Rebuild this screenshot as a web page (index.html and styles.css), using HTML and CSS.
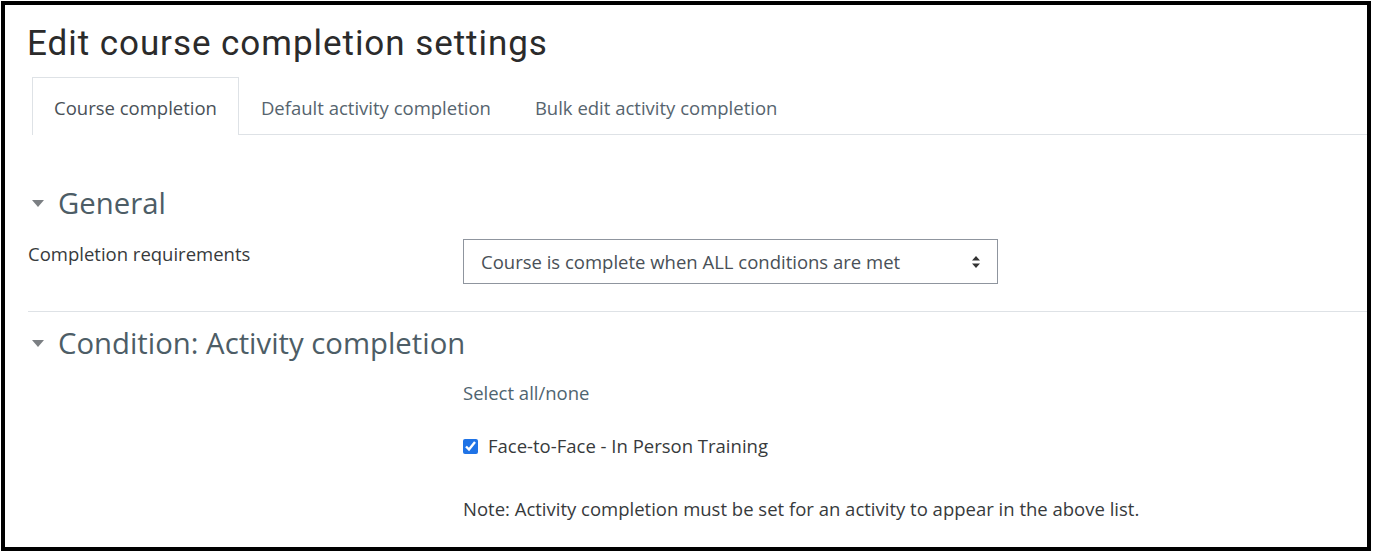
FILE: index.html
```html
<!DOCTYPE html>
<html lang="en">
<head>
<meta charset="utf-8">
<title>Edit course completion settings</title>
<link rel="stylesheet" href="styles.css">
</head>
<body>
<div class="frame">
  <h1 class="title">Edit course completion settings</h1>
  <ul class="tabs">
    <li class="tab active">Course completion</li>
    <li class="tab">Default activity completion</li>
    <li class="tab">Bulk edit activity completion</li>
  </ul>

  <section class="fieldset first">
    <h3 class="legend"><span class="caret"></span>General</h3>
    <div class="row">
      <div class="label">Completion requirements</div>
      <div class="field">
        <div class="select">
          <span>Course is complete when ALL conditions are met</span>
          <svg class="updown" width="10" height="14" viewBox="0 0 10 14"><path d="M1 5.5 L5 1 L9 5.5 Z M1 8.5 L5 13 L9 8.5 Z" fill="#333"/></svg>
        </div>
      </div>
    </div>
  </section>

  <section class="fieldset second">
    <h3 class="legend"><span class="caret"></span>Condition: Activity completion</h3>
    <div class="row">
      <div class="label"></div>
      <div class="field">
        <a class="selectall">Select all/none</a>
        <label class="check"><input type="checkbox" checked> Face-to-Face - In Person Training</label>
        <p class="note">Note: Activity completion must be set for an activity to appear in the above list.</p>
      </div>
    </div>
  </section>
</div>
</body>
</html>
```

FILE: styles.css
```css
html, body {
  margin: 0;
  padding: 0;
  background: #fff;
}
body {
  font-family: "Open Sans", "Liberation Sans", sans-serif;
  color: #373a3c;
}
.frame {
  box-sizing: border-box;
  margin: 1px 0 0 1px;
  width: 1370px;
  height: 550px;
  border: 4px solid #000;
  padding: 0 0 0 23px;
  overflow: hidden;
}
.title {
  font-family: Roboto, "Liberation Sans", sans-serif;
  font-weight: 400;
  font-size: 35px;
  letter-spacing: 0.95px;
  line-height: 40px;
  color: #2b2b2b;
  margin: 19px 0 0 -1px;
}
.tabs {
  list-style: none;
  margin: 13px 0 0 4px;
  padding: 0;
  display: flex;
  border-bottom: 1px solid #dee2e6;
  height: 57px;
}
.tab {
  font-size: 18.5px;
  color: #56646e;
  padding: 2px 21px 0;
  line-height: 55px;
  height: 57px;
  box-sizing: border-box;
  border: 1px solid transparent;
  border-bottom: 0;
}
.active {
  border-color: #dee2e6;
  background: #fff;
  height: 58px;
  color: #495057;
}
.first {
  margin-top: 49px;
  border-bottom: 1px solid #dee2e6;
  padding-bottom: 27px;
}
.legend {
  margin: 0;
  font-weight: 400;
  font-size: 29.3px;
  line-height: 38px;
  color: #4d5d66;
  display: flex;
  align-items: center;
}
.caret {
  width: 0;
  height: 0;
  border-left: 6.5px solid transparent;
  border-right: 6.5px solid transparent;
  border-top: 7px solid #7b7f83;
  margin: 0 14px 0 4px;
}
.row {
  display: flex;
}
.label {
  width: 435px;
  flex: none;
  font-size: 18.5px;
  line-height: 26px;
  padding-top: 2px;
}
.first .row {
  margin-top: 17px;
}
.select {
  box-sizing: border-box;
  width: 535px;
  height: 45px;
  border: 1px solid #8f959e;
  display: flex;
  align-items: center;
  justify-content: space-between;
  padding: 0 16px 0 17px;
  font-size: 18.5px;
  color: #495057;
}
.second {
  margin-top: 12px;
}
.field {
  font-size: 18.5px;
}
.second .row {
  margin-top: 19px;
}
.selectall {
  display: block;
  color: #4f6470;
  line-height: 24px;
}
.check {
  display: flex;
  align-items: center;
  margin-top: 29px;
  line-height: 24px;
}
.check input {
  width: 15px;
  height: 15px;
  margin: 0 10px 0 0;
  accent-color: #1f73e6;
}
.note {
  margin: 39px 0 0;
  line-height: 24px;
}
```
